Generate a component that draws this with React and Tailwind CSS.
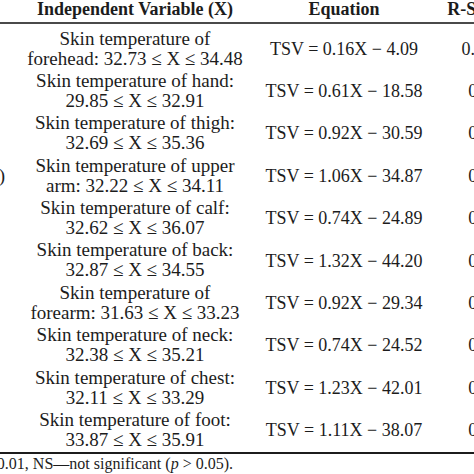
const rows = [
  ["Skin temperature of", "forehead: 32.73 ≤ X ≤ 34.48", "TSV = 0.16X − 4.09", "0.59 *"],
  ["Skin temperature of hand:", "29.85 ≤ X ≤ 32.91", "TSV = 0.61X − 18.58", "0.71"],
  ["Skin temperature of thigh:", "32.69 ≤ X ≤ 35.36", "TSV = 0.92X − 30.59", "0.83"],
  ["Skin temperature of upper", "arm: 32.22 ≤ X ≤ 34.11", "TSV = 1.06X − 34.87", "0.88"],
  ["Skin temperature of calf:", "32.62 ≤ X ≤ 36.07", "TSV = 0.74X − 24.89", "0.79"],
  ["Skin temperature of back:", "32.87 ≤ X ≤ 34.55", "TSV = 1.32X − 44.20", "0.86"],
  ["Skin temperature of", "forearm: 31.63 ≤ X ≤ 33.23", "TSV = 0.92X − 29.34", "0.84"],
  ["Skin temperature of neck:", "32.38 ≤ X ≤ 35.21", "TSV = 0.74X − 24.52", "0.77"],
  ["Skin temperature of chest:", "32.11 ≤ X ≤ 33.29", "TSV = 1.23X − 42.01", "0.81"],
  ["Skin temperature of foot:", "33.87 ≤ X ≤ 35.91", "TSV = 1.11X − 38.07", "0.85"],
];

export default function App() {
  return (
    <div className="w-[474px] h-[474px] overflow-hidden bg-white text-[#1c1c1c] font-['Liberation_Serif',serif]">
      <div className="ml-[-55px] w-[600px]">
        {/* header */}
        <div className="grid grid-cols-[60px_260px_158px_122px] h-[24px] border-b-2 border-[#4a4a4a] text-[18px] leading-[18px] font-bold">
          <div />
          <div className="text-center">Independent Variable (X)</div>
          <div className="text-center">Equation</div>
          <div className="text-center">R-Square</div>
        </div>

        {/* body */}
        <div className="grid grid-cols-[60px_260px_158px_122px] pt-[3.5px] pb-[1px] text-[19px] leading-[20px]">
          <div className="row-span-10 text-right pt-[138px] whitespace-nowrap">(TSV)</div>
          {rows.map((r, i) => (
            <div key={i} className="contents">
              <div className="text-center whitespace-nowrap h-[42.4px] pt-[1px]">
                <div>{r[0]}</div>
                <div>{r[1]}</div>
              </div>
              <div className="flex items-center justify-center whitespace-nowrap text-[18px]">{r[2]}</div>
              <div className="flex items-center justify-center whitespace-nowrap text-[18px]">{r[3]}</div>
            </div>
          ))}
        </div>
      </div>

      {/* bottom rule + note */}
      <div className="border-t-2 border-[#1c1c1c]" />
      <div className="flex justify-end w-[233px] whitespace-nowrap text-[16px] leading-[20px]">
        <span>
          * <i>p</i> &lt; 0.05, ** <i>p</i> &lt; 0.01, NS—not significant (<i>p</i> &gt; 0.05).
        </span>
      </div>
    </div>
  );
}
